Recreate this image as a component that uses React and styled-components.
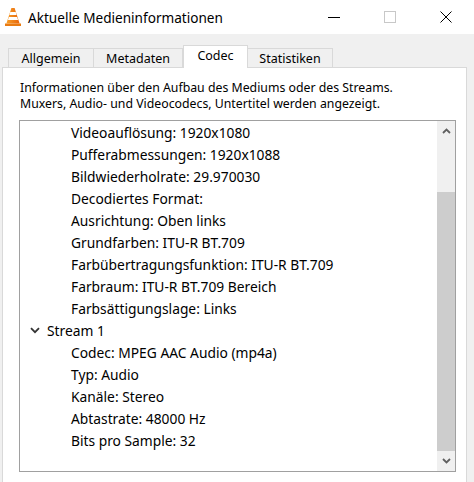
import React from "react";
import styled, { createGlobalStyle } from "styled-components";

const Global = createGlobalStyle`
  html, body { margin: 0; padding: 0; background: #f0f0f0; }
  body { font-family: "Noto Sans", "Open Sans", sans-serif; color: #000; overflow: hidden; }
`;

const Window = styled.div`
  width: 474px;
  height: 482px;
  display: flex;
  flex-direction: column;
  background: #f0f0f0;
  overflow: hidden;
`;

const TitleBar = styled.div`
  height: 34px;
  flex: none;
  background: #fff;
  display: flex;
  align-items: center;
  padding-left: 4px;
`;

const Title = styled.div`
  font-size: 13.6px;
  margin-left: 6px;
  color: #000;
  flex: 1;
`;

const Controls = styled.div`
  display: flex;
  align-items: center;
  height: 100%;
`;

const CtrlBtn = styled.div`
  width: 56px;
  height: 100%;
  display: flex;
  align-items: center;
  justify-content: center;
`;

const Body = styled.div`
  flex: 1;
  display: flex;
  flex-direction: column;
  padding: 11px 7px 0 2px;
`;

const TabRow = styled.div`
  display: flex;
  align-items: flex-end;
  padding-left: 6px;
  height: 23px;
  position: relative;
  z-index: 1;
  margin-bottom: -1px;
`;

const Tab = styled.div`
  height: ${(p) => (p.$active ? "23px" : "20px")};
  box-sizing: border-box;
  display: flex;
  align-items: center;
  justify-content: center;
  font-size: 12.5px;
  background: ${(p) => (p.$active ? "#fff" : "#f0f0f0")};
  border: 1px solid #d9d9d9;
  border-bottom: ${(p) => (p.$active ? "none" : "1px solid #d9d9d9")};
  margin-left: ${(p) => (p.$first || p.$active ? "0" : "-1px")};
  ${(p) => (p.$active ? "padding-bottom: 3px;" : "")}
  width: ${(p) => p.$w}px;
`;

const Panel = styled.div`
  flex: 1;
  background: #fff;
  border: 1px solid #d9d9d9;
  border-bottom: none;
  padding: 12px 11px 0 16px;
  display: flex;
  flex-direction: column;
`;

const Info = styled.div`
  font-size: 12.3px;
  line-height: 16px;
  margin-left: 1px;
`;

const ListBox = styled.div`
  margin-top: 8px;
  height: 352px;
  box-sizing: border-box;
  border: 1px solid #a0a0a0;
  display: flex;
  width: 437px;
`;

const ListContent = styled.div`
  flex: 1;
  overflow: hidden;
`;

const Row = styled.div`
  height: 22px;
  display: flex;
  align-items: center;
  font-size: 13.8px;
  padding-left: ${(p) => p.$indent}px;
  white-space: nowrap;
`;

const Chevron = styled.span`
  width: 17px;
  display: inline-flex;
  align-items: center;
`;

const ScrollBar = styled.div`
  width: 18px;
  flex: none;
  background: #f0f0f0;
  display: flex;
  flex-direction: column;
`;

const Arrow = styled.div`
  height: 20px;
  flex: none;
  display: flex;
  align-items: center;
  justify-content: center;
`;

const Track = styled.div`
  flex: 1;
  display: flex;
  flex-direction: column;
`;

const Thumb = styled.div`
  background: #cdcdcd;
  margin-top: 51px;
  flex: 1;
`;

const VlcIcon = () => (
  <svg width="18" height="20" viewBox="0 0 18 20">
    <defs>
      <linearGradient id="cone" x1="0" x2="1" y1="0" y2="0">
        <stop offset="0" stopColor="#f7a02a" />
        <stop offset="1" stopColor="#e8650a" />
      </linearGradient>
    </defs>
    <path d="M1 16.5 h16 v2.5 h-16 z" fill="#e97b12" />
    <path d="M7.4 1 h3.2 l5 15.5 h-13.2 z" fill="url(#cone)" />
    <path d="M6.3 5 h5.4 l0.9 3 h-7.2 z" fill="#fff" />
    <path d="M4.9 10 h8.2 l1 3 h-10.2 z" fill="#fff" />
  </svg>
);

const rows = [
  { t: "Videoauflösung: 1920x1080", i: 51 },
  { t: "Pufferabmessungen: 1920x1088", i: 51 },
  { t: "Bildwiederholrate: 29.970030", i: 51 },
  { t: "Decodiertes Format:", i: 51 },
  { t: "Ausrichtung: Oben links", i: 51 },
  { t: "Grundfarben: ITU-R BT.709", i: 51 },
  { t: "Farbübertragungsfunktion: ITU-R BT.709", i: 51 },
  { t: "Farbraum: ITU-R BT.709 Bereich", i: 51 },
  { t: "Farbsättigungslage: Links", i: 51 },
  { t: "Stream 1", i: 10, chev: true },
  { t: "Codec: MPEG AAC Audio (mp4a)", i: 51 },
  { t: "Typ: Audio", i: 51 },
  { t: "Kanäle: Stereo", i: 51 },
  { t: "Abtastrate: 48000 Hz", i: 51 },
  { t: "Bits pro Sample: 32", i: 51 },
];

export default function App() {
  return (
    <>
      <Global />
      <Window>
        <TitleBar>
          <VlcIcon />
          <Title>Aktuelle Medieninformationen</Title>
          <Controls>
            <CtrlBtn>
              <svg width="12" height="12" viewBox="0 0 12 12">
                <path d="M0 6.5 H12" stroke="#000" strokeWidth="1" />
              </svg>
            </CtrlBtn>
            <CtrlBtn>
              <svg width="12" height="12" viewBox="0 0 12 12">
                <rect x="0.5" y="0.5" width="11" height="11" fill="none" stroke="#c8c8c8" strokeWidth="1" />
              </svg>
            </CtrlBtn>
            <CtrlBtn>
              <svg width="12" height="12" viewBox="0 0 12 12">
                <path d="M0.5 0.5 L11.5 11.5 M11.5 0.5 L0.5 11.5" stroke="#000" strokeWidth="1" />
              </svg>
            </CtrlBtn>
          </Controls>
        </TitleBar>
        <Body>
          <TabRow>
            <Tab $first $w={86}>Allgemein</Tab>
            <Tab $w={90}>Metadaten</Tab>
            <Tab $active $w={65}>Codec</Tab>
            <Tab $w={86}>Statistiken</Tab>
          </TabRow>
          <Panel>
            <Info>
              Informationen über den Aufbau des Mediums oder des Streams.
              <br />
              Muxers, Audio- und Videocodecs, Untertitel werden angezeigt.
            </Info>
            <ListBox>
              <ListContent>
                {rows.map((r) => (
                  <Row key={r.t} $indent={r.i}>
                    {r.chev && (
                      <Chevron>
                        <svg width="10" height="7" viewBox="0 0 10 7">
                          <path d="M1 1.2 L5 5.2 L9 1.2" fill="none" stroke="#333" strokeWidth="1.8" />
                        </svg>
                      </Chevron>
                    )}
                    {r.t}
                  </Row>
                ))}
              </ListContent>
              <ScrollBar>
                <Arrow>
                  <svg width="9" height="6" viewBox="0 0 9 6">
                    <path d="M1 5 L4.5 1.5 L8 5" fill="none" stroke="#606060" strokeWidth="1.8" />
                  </svg>
                </Arrow>
                <Track>
                  <Thumb />
                </Track>
                <Arrow>
                  <svg width="9" height="6" viewBox="0 0 9 6">
                    <path d="M1 1 L4.5 4.5 L8 1" fill="none" stroke="#606060" strokeWidth="1.8" />
                  </svg>
                </Arrow>
              </ScrollBar>
            </ListBox>
          </Panel>
        </Body>
      </Window>
    </>
  );
}
